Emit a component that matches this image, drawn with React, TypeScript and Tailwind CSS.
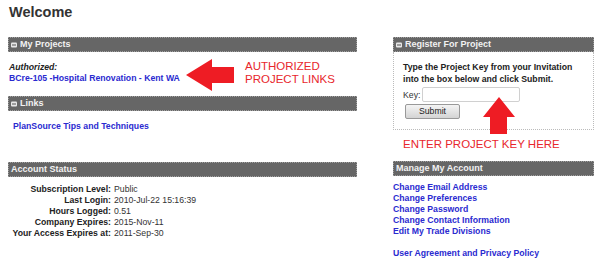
function Toggle() {
  return (
    <svg width="6" height="6" viewBox="0 0 6 6" className="shrink-0">
      <rect x="0" y="0.5" width="6" height="5" rx="1" fill="#e8e8e8" />
      <rect x="1" y="2.5" width="4" height="1" fill="#555" />
    </svg>
  );
}

function Bar({ title, icon = false }: { title: string; icon?: boolean }) {
  return (
    <div className="h-[15px] bg-[#666] border border-dotted border-[#a0a0a0] flex items-center gap-[2px] pl-[2px] text-[9px] font-bold text-[#f2f2f2] leading-none">
      {icon && <Toggle />}
      <span className={icon ? "ml-[1px]" : ""}>{title}</span>
    </div>
  );
}

const status = [
  ["Subscription Level:", "Public"],
  ["Last Login:", "2010-Jul-22 15:16:39"],
  ["Hours Logged:", "0.51"],
  ["Company Expires:", "2015-Nov-11"],
  ["Your Access Expires at:", "2011-Sep-30"],
];

const accountLinks = [
  "Change Email Address",
  "Change Preferences",
  "Change Password",
  "Change Contact Information",
  "Edit My Trade Divisions",
];

export default function App() {
  return (
    <div className="relative w-[600px] h-[264px] bg-white overflow-hidden font-['Liberation_Sans',Arial,sans-serif] text-[#333]">
      <h1 className="pl-[9px] pt-[4px] text-[14.5px] leading-[17px] font-bold text-[#333]">Welcome</h1>

      <div className="flex gap-[36px] pl-[8px] mt-[16px]">
        {/* left column */}
        <div className="w-[349px] flex flex-col">
          <Bar title="My Projects" icon />
          <div className="pt-[10px] pl-[1px] text-[8.7px] leading-[11px] font-bold">
            <div className="italic text-[#222]">Authorized:</div>
            <a className="text-[#2a2ad0]">BCre-105 -Hospital Renovation - Kent WA</a>
          </div>

          <div className="mt-[12px]">
            <Bar title="Links" icon />
          </div>
          <div className="pt-[10px] pl-[5px] text-[8.7px] leading-[11px] font-bold text-[#2a2ad0]">
            PlanSource Tips and Techniques
          </div>

          <div className="mt-[30px]">
            <Bar title="Account Status" />
          </div>
          <div className="pt-[7px] grid grid-cols-[103px_1fr] gap-x-[3px] text-[8.7px] leading-[11px]">
            {status.map(([k, v]) => (
              <div key={k} className="contents">
                <span className="text-right font-bold text-[#222]">{k}</span>
                <span className="text-[#333]">{v}</span>
              </div>
            ))}
          </div>
        </div>

        {/* right column */}
        <div className="w-[201px] flex flex-col">
          <Bar title="Register For Project" icon />
          <div className="border border-t-0 border-dotted border-[#bbb] pl-[9px] pt-[9px] pb-[10px] text-[9px] leading-[12px]">
            <p className="text-[8.7px] font-bold text-[#222]">
              Type the Project Key from your Invitation
              <br />
              into the box below and click Submit.
            </p>
            <div className="mt-[2px] flex items-center gap-[2px] text-[8.7px]">
              <span>Key:</span>
              <input className="w-[98px] h-[15px] border border-[#d0d0d0] rounded-[2px] bg-white outline-none" />
            </div>
            <button className="block mt-[2px] ml-[2px] w-[55px] h-[15px] border border-[#999] rounded-[2px] bg-gradient-to-b from-[#f4f4f4] to-[#d4d4d4] text-[8.7px] leading-none text-[#222]">
              Submit
            </button>
          </div>

          <div className="mt-[31px]">
            <Bar title="Manage My Account" />
          </div>
          <div className="pt-[6px] flex flex-col text-[8.7px] leading-[11px] font-bold text-[#2a2ad0]">
            {accountLinks.map((l) => (
              <a key={l}>{l}</a>
            ))}
            <a className="mt-[11px]">User Agreement and Privacy Policy</a>
          </div>
        </div>
      </div>

      {/* annotations */}
      <svg className="absolute left-0 top-0" width="600" height="264">
        <polygon points="186,75 212,59 212,67 234,67 234,83 212,83 212,91" fill="#ee1c24" />
        <polygon points="499,97 515,117 507,117 507,134 490,134 490,117 483,117" fill="#ee1c24" />
      </svg>
      <div className="absolute left-[245px] top-[60px] text-[11.5px] leading-[13px] text-[#e8262c]">
        AUTHORIZED
        <br />
        PROJECT LINKS
      </div>
      <div className="absolute left-[403px] top-[138px] text-[11.5px] leading-[13px] text-[#e8262c]">
        ENTER PROJECT KEY HERE
      </div>
    </div>
  );
}
